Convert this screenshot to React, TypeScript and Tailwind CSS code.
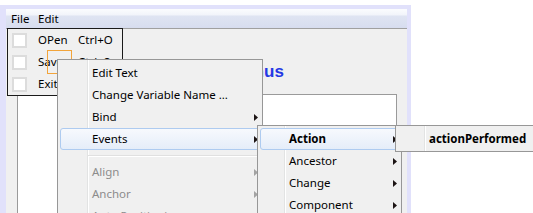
import React from "react";

function Arrow({ disabled }: { disabled?: boolean }) {
  return (
    <svg width="4" height="7" viewBox="0 0 4 7" className="shrink-0">
      <path d="M0 0L4 3.5L0 7Z" fill={disabled ? "#a3a3a3" : "#1c1414"} />
    </svg>
  );
}

type ItemProps = {
  label: string;
  arrow?: boolean;
  disabled?: boolean;
  hi?: boolean;
  bold?: boolean;
  pl: string;
};

function Item({ label, arrow, disabled, hi, bold, pl }: ItemProps) {
  return (
    <div
      className={
        "relative flex h-[22px] shrink-0 items-center justify-between rounded-[3px] border pr-[1px] " +
        pl +
        (hi
          ? " border-[#aecbf0] bg-[linear-gradient(to_bottom,#f7f9fd,#e5edf9)]"
          : " border-transparent")
      }
    >
      <span
        className={
          "whitespace-nowrap " +
          (bold ? "font-bold " : "") +
          (disabled ? "text-[#8c8c8c]" : "text-black")
        }
      >
        {label}
      </span>
      {arrow && <Arrow disabled={disabled} />}
    </div>
  );
}

export default function App() {
  return (
    <div className="relative h-[213px] w-[533px] overflow-hidden bg-white font-['Noto_Sans',sans-serif] text-[11.5px] leading-none text-black">
      {/* Window */}
      <div className="mt-[5px] flex h-[220px] w-[411px] flex-col border-t-[4px] border-r-[4px] border-l-[6px] border-[#e1e1fb]">
        {/* Menubar */}
        <div className="flex h-[20px] shrink-0 items-center border-b border-[#a0a0a0] bg-[linear-gradient(to_bottom,#fbfcfe_0%,#f2f4fa_30%,#dfe4f2_38%,#d7ddef_100%)] pl-[5px]">
          <span className="w-[27px]">File</span>
          <span>Edit</span>
        </div>
        {/* Content */}
        <div className="flex flex-1 flex-col bg-[#f0f0f0]">
          <div className="h-[65px] shrink-0 pt-[34px] pl-[224px]">
            <span className="font-['Liberation_Sans',sans-serif] text-[17px] leading-[17px] font-bold text-[#2438e4]">
              Menus
            </span>
          </div>
          <div className="mr-[10px] ml-[11px] flex-1 border border-[#9a9a9a] bg-white" />
        </div>
      </div>

      {/* File popup */}
      <div className="absolute top-[28px] left-[7px] flex h-[68px] w-[116px] flex-col border border-[#1a1a1a] bg-[#f0f0f0]">
        {[
          ["OPen", "Ctrl+O"],
          ["Save", "Ctrl+S"],
          ["Exit", ""],
        ].map(([a, b]) => (
          <div key={a} className="flex h-[22px] items-center">
            <div className="ml-[4px] h-[15px] w-[15px] border-2 border-[#dcdcdc] bg-white" />
            <span className="ml-[11px] w-[40px]">{a}</span>
            <span>{b}</span>
          </div>
        ))}
      </div>

      {/* Orange selection */}
      <div className="absolute top-[50px] left-[47px] h-[24px] w-[25px] border border-[#f2a43a]" />

      {/* Context menu */}
      <div className="absolute top-[59px] left-[57px] flex h-[170px] w-[206px] flex-col border border-[#979797] bg-[#f0f0f0] p-[2px]">
        <div className="absolute top-0 bottom-0 left-[29px] w-[1px] bg-[#e2e3e3]" />
        <div className="absolute top-0 bottom-0 left-[30px] w-[1px] bg-white" />
        <Item pl="pl-[31px]" label="Edit Text" />
        <Item pl="pl-[31px]" label="Change Variable Name ..." />
        <Item pl="pl-[31px]" label="Bind" arrow />
        <Item pl="pl-[31px]" label="Events" arrow hi />
        <div className="relative h-[11px] shrink-0 pt-[5px] pl-[28px]">
          <div className="h-[1px] bg-[#e0e0e0]" />
          <div className="h-[1px] bg-white" />
        </div>
        <Item pl="pl-[31px]" label="Align" arrow disabled />
        <Item pl="pl-[31px]" label="Anchor" arrow disabled />
        <Item pl="pl-[31px]" label="Auto Positioning" arrow disabled />
      </div>

      {/* Submenu 1 */}
      <div className="absolute top-[125px] left-[257px] flex h-[100px] w-[145px] flex-col border border-[#979797] bg-[#f0f0f0] p-[2px]">
        <div className="absolute top-0 bottom-0 left-[26px] w-[1px] bg-[#e2e3e3]" />
        <div className="absolute top-0 bottom-0 left-[27px] w-[1px] bg-white" />
        <Item pl="pl-[28px]" label="Action" arrow hi bold />
        <Item pl="pl-[28px]" label="Ancestor" arrow />
        <Item pl="pl-[28px]" label="Change" arrow />
        <Item pl="pl-[28px]" label="Component" arrow />
      </div>

      {/* Submenu 2 */}
      <div className="absolute top-[125px] left-[395px] flex h-[27px] w-[160px] flex-col border border-[#979797] bg-[#f0f0f0] p-[2px]">
        <div className="absolute top-0 bottom-0 left-[28px] w-[1px] bg-[#e2e3e3]" />
        <div className="absolute top-0 bottom-0 left-[29px] w-[1px] bg-white" />
        <Item pl="pl-[30px]" label="actionPerformed" bold />
      </div>
    </div>
  );
}
